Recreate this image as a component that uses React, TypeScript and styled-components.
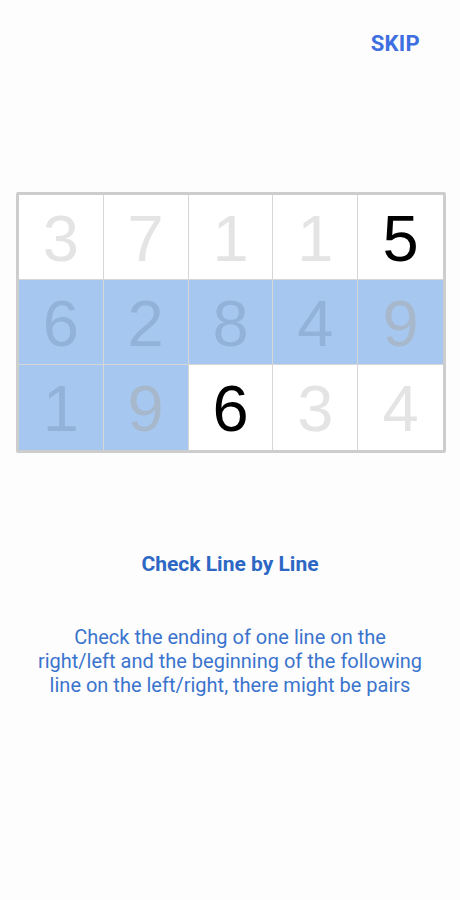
import React from 'react';
import styled, { createGlobalStyle } from 'styled-components';

const GlobalStyle = createGlobalStyle`
  html, body {
    margin: 0;
    padding: 0;
    background: #fdfdfd;
    font-family: Roboto, 'Liberation Sans', sans-serif;
  }
`;

const Screen = styled.div`
  width: 460px;
  height: 900px;
  display: flex;
  flex-direction: column;
  overflow: hidden;
`;

const TopBar = styled.div`
  display: flex;
  justify-content: flex-end;
  align-items: flex-start;
  padding: 31px 40px 0 0;
  height: 192px;
  box-sizing: border-box;
`;

const SkipButton = styled.button`
  border: none;
  background: none;
  padding: 0;
  font-family: Roboto, sans-serif;
  font-weight: 700;
  font-size: 22px;
  line-height: 26px;
  color: #3e6fe0;
  cursor: pointer;
  letter-spacing: 0.3px;
`;

const Board = styled.div`
  margin-left: 16px;
  width: 430px;
  box-sizing: border-box;
  border: 3px solid #cdcdcd;
  border-radius: 2px;
  background: #fff;
  display: grid;
  grid-template-columns: repeat(5, 1fr);
`;

const Cell = styled.div<{ $marked: boolean; $active: boolean; $tone?: string }>`
  height: 85px;
  box-sizing: border-box;
  border-right: 1px solid #d6d6d6;
  border-bottom: 1px solid #d6d6d6;
  background: ${(p) => (p.$marked ? '#a6c8f0' : '#fff')};
  display: flex;
  align-items: center;
  justify-content: center;
  font-family: 'Liberation Sans', Arial, sans-serif;
  font-size: 65px;
  line-height: 1;
  padding-top: 2px;
  color: ${(p) => (p.$active ? '#000' : p.$marked ? p.$tone || '#92b2d9' : '#e4e4e4')};

  &:nth-child(5n) {
    border-right: none;
  }
  &:nth-child(n + 11) {
    border-bottom: none;
  }
`;

const Title = styled.h2`
  margin: 98px 0 0;
  text-align: center;
  font-family: Roboto, sans-serif;
  font-weight: 700;
  font-size: 21px;
  line-height: 26px;
  color: #2d67c4;
`;

const Hint = styled.p`
  margin: 48px auto 0;
  width: 392px;
  text-align: center;
  font-family: Roboto, sans-serif;
  font-size: 20px;
  line-height: 24px;
  color: #3b74cd;
`;

const cells = [
  { n: 3 }, { n: 7 }, { n: 1 }, { n: 1 }, { n: 5, active: true },
  { n: 6, marked: true }, { n: 2, marked: true }, { n: 8, marked: true }, { n: 4, marked: true }, { n: 9, marked: true, tone: '#a8b8cc' },
  { n: 1, marked: true }, { n: 9, marked: true, tone: '#a8b8cc' }, { n: 6, active: true }, { n: 3 }, { n: 4 },
];

export default function App() {
  return (
    <Screen>
      <GlobalStyle />
      <TopBar>
        <SkipButton>SKIP</SkipButton>
      </TopBar>
      <Board>
        {cells.map((c, i) => (
          <Cell key={i} $marked={!!c.marked} $active={!!c.active} $tone={c.tone}>
            {c.n}
          </Cell>
        ))}
      </Board>
      <Title>Check Line by Line</Title>
      <Hint>
        Check the ending of one line on the right/left and the beginning of the following line on the
        left/right, there might be pairs
      </Hint>
    </Screen>
  );
}
